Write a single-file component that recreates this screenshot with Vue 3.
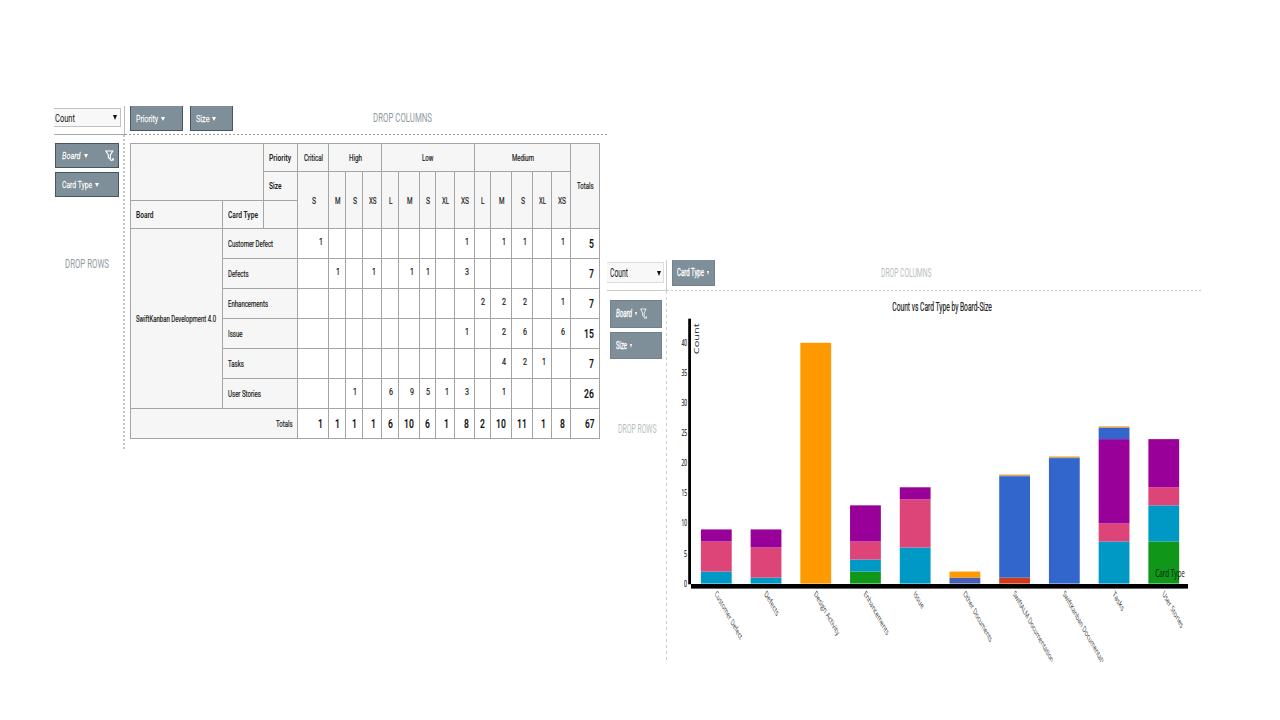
<script setup>
// Scales a label horizontally to a given width and lets it take up that width in the layout.
const vFit = {
  mounted(el, { value }) {
    const natural = el.getBoundingClientRect().width
    el.style.transform = `scaleX(${value / natural})`
    el.style.marginRight = `${value - natural}px`
  },
}

const sizes = [
  ['S', 4], ['M', 5.5], ['S', 4], ['XS', 7.5], ['L', 3.5], ['M', 5.5], ['S', 4], ['XL', 7],
  ['XS', 8], ['L', 3.5], ['M', 5.5], ['S', 4], ['XL', 7], ['XS', 8],
]
const priorities = [
  { name: 'Critical', w: 19, cls: 'critical' },
  { name: 'High', w: 13, cls: 'high' },
  { name: 'Low', w: 11.5, cls: 'low' },
  { name: 'Medium', w: 22, cls: 'medium' },
]
const rows = [
  { name: 'Customer Defect', w: 45, v: [1, '', '', '', '', '', '', '', 1, '', 1, 1, '', 1], total: 5 },
  { name: 'Defects', w: 20.5, v: ['', 1, '', 1, '', 1, 1, '', 3, '', '', '', '', ''], total: 7 },
  { name: 'Enhancements', w: 40, v: ['', '', '', '', '', '', '', '', '', 2, 2, 2, '', 1], total: 7 },
  { name: 'Issue', w: 14.5, v: ['', '', '', '', '', '', '', '', 1, '', 2, 6, '', 6], total: 15 },
  { name: 'Tasks', w: 16, v: ['', '', '', '', '', '', '', '', '', '', 4, 2, 1, ''], total: 7 },
  { name: 'User Stories', w: 33, v: ['', '', 1, '', 6, 9, 5, 1, 3, '', 1, '', '', ''], total: 26 },
]
const totals = [1, 1, 1, 1, 6, 10, 6, 1, 8, 2, 10, 11, 1, 8]
const digits = (n, one) => String(n).length * one

const C = {
  green: '#109618', cyan: '#0099c6', pink: '#dd4477', purple: '#990099',
  orange: '#ff9900', blue: '#3366cc', red: '#cf3c1c', slate: '#4560b4', top: '#d9a45c',
}
const unit = 6.02
const base = 583.6
const chart = [
  { name: 'Customer Defect', dy: 46, s: [['cyan', 2], ['pink', 5], ['purple', 2]] },
  { name: 'Defects', dy: 22.5, s: [['cyan', 1], ['pink', 5], ['purple', 3]] },
  { name: 'Design Activity', dy: 42, s: [['orange', 40]] },
  { name: 'Enhancements', dy: 41.5, s: [['green', 2], ['cyan', 2], ['pink', 3], ['purple', 6]] },
  { name: 'Issue', dy: 15.5, s: [['cyan', 6], ['pink', 8], ['purple', 2]] },
  { name: 'Other Documents', dy: 48.5, s: [['slate', 1], ['orange', 1]] },
  { name: 'SwiftALM Documentation', dy: 69, s: [['red', 1], ['blue', 16.85], ['top', 0.27]] },
  { name: 'SwiftKanban Documentation', dy: 77, s: [['blue', 20.85], ['top', 0.27]] },
  { name: 'Tasks', dy: 17.5, s: [['cyan', 7], ['pink', 3], ['purple', 14], ['blue', 1.85], ['top', 0.27]] },
  { name: 'User Stories', dy: 34.5, s: [['green', 7], ['cyan', 6], ['pink', 3], ['purple', 8]] },
].map((b, i) => {
  let acc = 0
  return {
    ...b,
    x: 700.9 + i * 49.72,
    s: b.s.map(([c, n]) => {
      acc += n
      return { c: C[c], y: base - acc * unit, h: n * unit }
    }),
  }
})
const ticks = [0, 5, 10, 15, 20, 25, 30, 35, 40]
</script>

<template>
  <main class="stage">
    <section class="pivot">
      <div class="corner">
        <div class="select"><span v-fit="20" class="t">Count</span><i class="caret"></i></div>
      </div>
      <div class="cols">
        <div class="chip priority"><span v-fit="22" class="t">Priority</span><i class="tri"></i></div>
        <div class="chip size"><span v-fit="13.5" class="t">Size</span><i class="tri"></i></div>
        <span class="hint hint-cols"><span v-fit="59" class="t">DROP COLUMNS</span></span>
      </div>
      <div class="rows">
        <div class="chip"><span v-fit="18.5" class="t it">Board</span><i class="tri"></i>
          <svg class="funnel" viewBox="0 0 9 12"><path d="M.8 1h7L5.3 5v4.2L3.3 7.7V5zM5.2 9.6q1.8 2 3-.3M8.4 10.5l-.1-1.8-1.5.5" /></svg>
        </div>
        <div class="chip"><span v-fit="30" class="t">Card Type</span><i class="tri"></i></div>
        <span class="hint"><span v-fit="44" class="t">DROP ROWS</span></span>
      </div>
      <div class="body">
        <div class="table">
          <div class="h blank"></div>
          <div class="h lab b"><span v-fit="22" class="t">Priority</span></div>
          <div v-for="p in priorities" :key="p.name" class="h" :class="p.cls"><span v-fit="p.w" class="t">{{ p.name }}</span></div>
          <div class="h tot"><span v-fit="16.5" class="t">Totals</span></div>
          <div class="h lab b sizelab"><span v-fit="12.5" class="t">Size</span></div>
          <div v-for="(s, i) in sizes" :key="i" class="h sz"><span v-fit="s[1]" class="t">{{ s[0] }}</span></div>
          <div class="h lab b boardlab"><span v-fit="17.5" class="t">Board</span></div>
          <div class="h lab b typelab"><span v-fit="30" class="t">Card Type</span></div>
          <div class="h gap"></div>
          <div class="h lab board"><span v-fit="80" class="t">SwiftKanban Development 4.0</span></div>
          <template v-for="r in rows" :key="r.name">
            <div class="h lab name"><span v-fit="r.w" class="t">{{ r.name }}</span></div>
            <div v-for="(n, i) in r.v" :key="i" class="num"><span v-if="n !== ''" v-fit="4" class="t">{{ n }}</span></div>
            <div class="sum b"><span v-fit="digits(r.total, 4.9)" class="t">{{ r.total }}</span></div>
          </template>
          <div class="h foot"><span v-fit="16.5" class="t">Totals</span></div>
          <div v-for="(n, i) in totals" :key="i" class="sum b"><span v-fit="digits(n, 4.9)" class="t">{{ n }}</span></div>
          <div class="sum b"><span v-fit="9.5" class="t">67</span></div>
        </div>
      </div>
    </section>

    <section class="pivot second">
      <div class="corner">
        <div class="select"><span v-fit="18" class="t">Count</span><i class="caret"></i></div>
      </div>
      <div class="cols">
        <div class="chip ctype"><span v-fit="27" class="t">Card Type</span><i class="tri"></i></div>
        <span class="hint hint-cols"><span v-fit="50.5" class="t">DROP COLUMNS</span></span>
      </div>
      <div class="rows">
        <div class="chip"><span v-fit="16" class="t it">Board</span><i class="tri"></i>
          <svg class="funnel" viewBox="0 0 9 12" preserveAspectRatio="none"><path d="M.8 1h7L5.3 5v4.2L3.3 7.7V5zM5.2 9.6q1.8 2 3-.3M8.4 10.5l-.1-1.8-1.5.5" /></svg>
        </div>
        <div class="chip"><span v-fit="11" class="t">Size</span><i class="tri"></i></div>
        <span class="hint"><span v-fit="38.5" class="t">DROP ROWS</span></span>
      </div>
      <svg class="chart" viewBox="667 291 536 371">
        <text class="title" x="892.3" y="311.4" textLength="99.5" lengthAdjust="spacingAndGlyphs">Count vs Card Type by Board-Size</text>
        <g v-for="b in chart" :key="b.name">
          <rect v-for="(s, i) in b.s" :key="i" :x="b.x" :y="s.y" width="30.8" :height="s.h" :fill="s.c" />
          <text class="xl" :transform="`translate(${b.x + 13.5} 594.4) scale(.56 1) rotate(45)`" :textLength="b.dy * 1.414" lengthAdjust="spacingAndGlyphs">{{ b.name }}</text>
        </g>
        <rect x="688.2" y="318.7" width="2.8" height="265.6" />
        <rect x="691" y="584" width="497" height="4.6" />
        <text v-for="n in ticks" :key="n" class="tick" :x="n > 9 ? 681.4 : 684" :y="base - n * unit + 3" :textLength="n > 9 ? 5.6 : 3" lengthAdjust="spacingAndGlyphs">{{ n }}</text>
        <text class="ylab" transform="translate(699 354.2) rotate(-90)" textLength="31" lengthAdjust="spacingAndGlyphs">Count</text>
        <text class="clab" x="1155.3" y="577.2" textLength="29.5" lengthAdjust="spacingAndGlyphs">Card Type</text>
      </svg>
    </section>
  </main>
</template>

<style>
html, body { margin: 0; background: #fff; }
</style>

<style scoped>
.stage {
  box-sizing: border-box;
  width: 1280px;
  height: 720px;
  padding: 106px 0 0 54px;
  display: flex;
  align-items: flex-start;
  overflow: hidden;
  background: #fff;
  font: 10px/12px Roboto, "Liberation Sans", sans-serif;
  color: #222;
}
.stage div, .stage section { box-sizing: border-box; }
.t { display: inline-block; flex: none; white-space: nowrap; transform-origin: 0 50%; }
.it { font-style: italic; }
.b { font-weight: 600; }

.pivot {
  flex: none;
  display: grid;
  grid-template: 29px 314px / 71px 482px;
  width: 553px;
}
.corner { border-right: 1px solid #bbb; border-bottom: 1px solid #aaa; padding-top: 2px; }
.select {
  width: 67px; height: 19px;
  display: flex; align-items: center; justify-content: space-between;
  padding: 0 3px 0 1px;
  background: #f8f8f8;
  border: 1px solid #c2c2c2; border-left: 0;
  font-size: 11.5px; color: #111;
}
.caret, .tri { width: 0; height: 0; border: 2.4px solid transparent; border-bottom: 0; border-top: 5px solid #111; }
.tri { border-width: 4px 2px 0; border-top-color: #fff; margin-left: 3px; }
.cols {
  display: flex; align-items: flex-start;
  padding-left: 5px;
  background: repeating-linear-gradient(90deg, #999 0 2px, transparent 2px 4px) 0 28px / 100% 1px no-repeat;
}
.rows {
  display: flex; flex-direction: column; gap: 4px;
  padding: 8px 6px 0 1px;
  background: repeating-linear-gradient(#c4c4c4 0 2px, transparent 2px 4px) 69px 0 / 2px 100% no-repeat;
}
.chip {
  flex: none;
  height: 25px;
  display: flex; align-items: center;
  padding-left: 6px;
  background: #7f8f99;
  border: 1px solid #47555e;
  color: #fff; font-size: 9.8px;
  text-shadow: 0 0 1px #33414a;
  -webkit-text-stroke: .3px #fff;
}
.cols .chip { border-top: 0; }
.priority { width: 53px; margin-right: 6.5px; }
.cols .priority, .cols .size { padding-left: 5px; padding-top: 1px; }
.size { width: 43.5px; }
.funnel { width: 9px; height: 12px; margin-left: auto; margin-right: 4px; fill: none; stroke: #fff; stroke-width: 1.1; }
.hint { color: #919ba1; font-size: 12px; }
.hint-cols { margin: 6px 0 0 140px; }
.rows .hint { margin: 56.5px 0 0 10px; }
.body { padding: 8px 0 0 5px; }

.table {
  display: grid;
  width: 470px;
  grid-template-columns: 92px 41px 34px 31px 17px 17px 19px 17px 21px 16px 19px 20px 16px 21px 21px 19px 19px 29px;
  grid-template-rows: 28px 29px 28px repeat(6, 30px) 30px;
  border: solid #a3a6a5; border-width: 1px 0 0 1px;
  font-size: 9.4px;
  -webkit-text-stroke: .22px #222;
}
.table > div {
  display: flex; align-items: center; justify-content: center;
  border: solid #a3a6a5; border-width: 0 1px 1px 0;
  min-width: 0;
}
.table .h { background: #f6f6f6; }
.table .lab { justify-content: flex-start; padding-left: 5px; }
.table .b { -webkit-text-stroke: 0; }
.table .b.lab { font-size: 9.8px; }
.blank { grid-area: 1 / 1 / 3 / 3; }
.high { grid-column: span 3; }
.low { grid-column: span 5; }
.medium { grid-column: span 5; }
.tot { grid-area: 1 / 18 / 4 / 19; }
.sizelab { grid-area: 2 / 3; }
.table .sz { grid-row: 2 / 4; padding: 1px 0 0 1px; }
.boardlab { grid-area: 3 / 1; }
.typelab { grid-area: 3 / 2; }
.gap { grid-area: 3 / 3; }
.board { grid-area: 4 / 1 / 10 / 2; }
.name { grid-column: 2 / 4; }
.foot { grid-column: 1 / 4; }
.table .foot { justify-content: flex-end; padding-right: 5px; }
.table .num { justify-content: flex-end; padding: 0 5px 3px 0; font-size: 8.8px; }
.table .sum { justify-content: flex-end; padding: 0 5px 0 0; font-size: 12px; color: #111; }

.second { margin-top: 154px; grid-template: 31px 371px / 60px 536px; width: 596px; }
.second .corner { border-color: #ccc; padding-top: 2px; }
.second .select { width: 57px; height: 21px; padding: 1px 2px 0 3px; border-color: #ddd; font-size: 12px; }
.second .cols { background: repeating-linear-gradient(90deg, #ccc 0 2px, transparent 2px 4px) 0 30px / 100% 1px no-repeat; }
.second .rows { padding: 9px 5px 0 3px; background: repeating-linear-gradient(#ccc 0 3px, transparent 3px 6px) 59px 0 / 1px 100% no-repeat; }
.second .chip { height: 28px; border-color: #71818b; font-size: 10.8px; padding-left: 5px; text-shadow: none; }
.second .rows .chip + .chip { height: 27px; }
.second .ctype { width: 43px; height: 26px; padding: 1px 0 0 4px; }
.second .tri { border-width: 4px 1.8px 0; margin-left: 2.5px; }
.second .caret { border-width: 5.5px 2.1px 0; }
.second .funnel { width: 7px; margin: 0 0 0 3px; stroke-width: .9; }
.second .hint { color: #b7bfc3; }
.second .hint-cols { margin: 7px 0 0 166px; }
.second .rows .hint { margin: 60px 0 0 8px; }
.chart { width: 536px; height: 371px; overflow: hidden; display: block; }
.title { font-size: 12px; fill: #222; stroke: #222; stroke-width: .2px; }
.xl { font: 9.3px "Open Sans", sans-serif; fill: #333; }
.tick { font: 8.5px "Open Sans", sans-serif; fill: #111; stroke: #111; stroke-width: .15px; }
.ylab { font: 8px "Open Sans", sans-serif; fill: #222; }
.clab { font: 10.5px "Open Sans", sans-serif; fill: #111; }
</style>
